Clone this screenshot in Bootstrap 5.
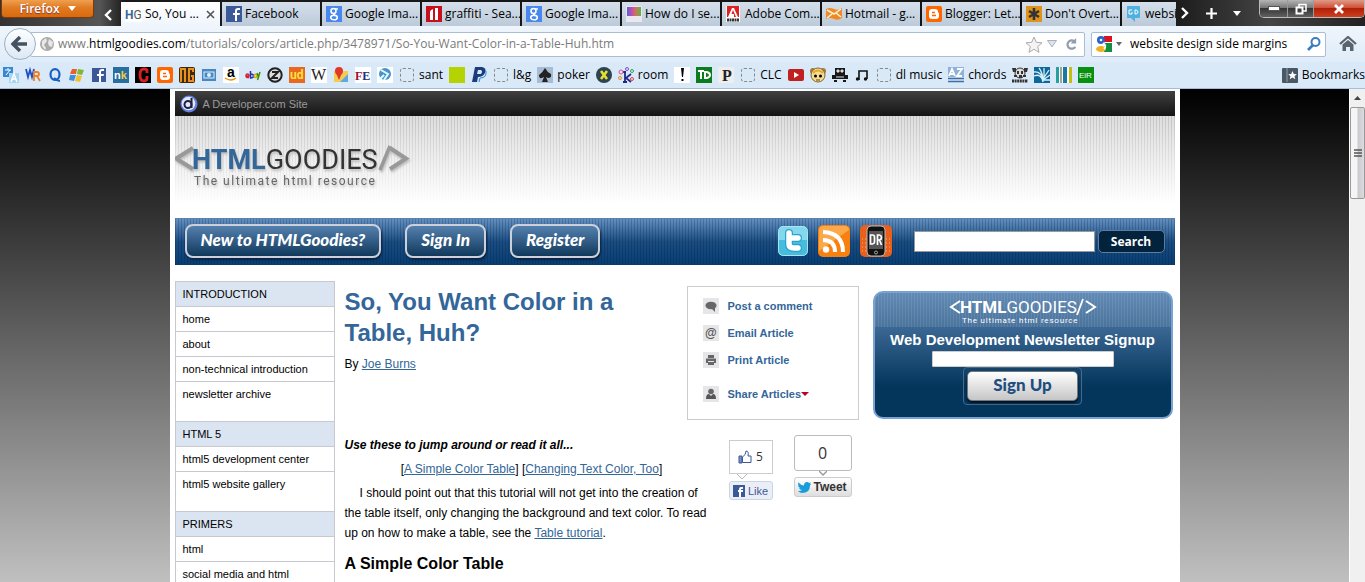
<!DOCTYPE html>
<html lang="en">
<head>
<meta charset="utf-8">
<meta name="viewport" content="width=device-width, initial-scale=1">
<title>So, You Want Color in a Table, Huh?</title>
<link href="https://cdn.jsdelivr.net/npm/bootstrap@5.3.0/dist/css/bootstrap.min.css" rel="stylesheet">
<style>
  body{font-family:"Liberation Sans",Arial,sans-serif;font-size:12px;line-height:16px;color:#000;background:#fff}
  svg{display:block;flex:none}
  .chrome{font-family:"Open Sans","Noto Sans",sans-serif;font-size:12px}
  .logotext{font-family:Roboto,sans-serif}
  /* tab strip */
  .tabstrip{height:26px;background:linear-gradient(90deg,#333 0,#555 100px,#1a1a1a 125px,#111 1150px,#222 1190px,#444 1270px,#222)}
  .fx-btn{width:93px;height:18px;margin-left:1px;border:1px solid #7c3b08;border-top:0;border-radius:0 0 4px 4px;background:linear-gradient(#efa050,#e07b20 45%,#d9690f);color:#fff;font-size:12px;font-weight:600;line-height:16px;padding:0;text-shadow:0 1px 1px #833}
  .caret{display:inline-block;border:4px solid transparent;border-top:5px solid #fff;border-bottom:0}
  .scroll-tab{width:27px}
  .tab{width:98px;height:24px;margin-right:2px;padding:0 0 0 4px;flex:none;background:linear-gradient(#d5dfeb,#bccad9);color:#000;text-decoration:none;gap:3px;white-space:nowrap}
  .tab.current{background:linear-gradient(#fff,#eff5fc);width:99px;padding-right:5px}
  .plain{border:0;background:none;padding:0;color:inherit}
  .tab-tools{width:83px;padding-left:4px}
  .winctl{width:106px;height:18px;border:1px solid #bbb;border-top:0;border-radius:0 0 5px 5px;overflow:hidden}
  .winctl button{border:0;padding:0;display:flex;align-items:center;justify-content:center;background:linear-gradient(#b5b5b5,#787878 45%,#353535 50%,#606060);border-right:1px solid #999}
  .winctl button:last-child{background:linear-gradient(#e09a88,#cf5237 45%,#b02008 50%,#cf4020);border:0}
  /* address row */
  .addressrow{height:36px;background:linear-gradient(#eff5fc,#e0ecf8);padding:0 8px 0 4px}
  .back{width:32px;height:32px;border:1px solid #9aafc6;border-radius:50%;background:linear-gradient(#fdfeff,#dbe8f5);padding:0;z-index:1}
  .field{height:25px;background:#fff;border:1px solid #a9bdd3;border-radius:2px}
  .urlfield{margin-left:-6px;padding:0 6px 0 9px;gap:4px;color:#7b7b7b}
  .urlfield b{color:#000;font-weight:400}
  .searchfield{width:235px;margin:0 13px 0 6px;padding:0 4px;gap:4px}
  .searchfield input{border:0;outline:0;padding:0;min-width:0;font-size:12px;color:#000}
  /* bookmarks */
  .marks{height:27px;background:#dae9f8;border-bottom:1px solid #a6bbd4;padding-left:3px;gap:6px;white-space:nowrap}
  .marks a{display:flex;align-items:center;gap:4px;color:#000;text-decoration:none}
  .slot{width:14px;height:14px;border:1px dashed #888;border-radius:3px;margin:0 1px}
  /* viewport */
  .view{background:linear-gradient(#000,#c0c0c0)}
  .sheet{width:100%;max-width:1010px;background:#fff;padding:2px 5px 0}
  .netbar{height:25px;background:linear-gradient(#404040,#141414);color:#9a9a9a;font-size:11px;padding-left:5px;gap:5px}
  .masthead{height:87px;background:linear-gradient(rgba(255,255,255,.1),#fff),repeating-linear-gradient(90deg,#bcbcbc 0 1px,#dadada 1px 3px);padding-top:27px}
  .masthead a svg{filter:drop-shadow(1px 2px 1px #bbb)}
  .bluebar{height:47px;margin-top:15px;background:repeating-linear-gradient(90deg,rgba(0,20,60,.22) 0 1px,transparent 1px 3px),linear-gradient(#6290c0,#1a4c80 50%,#083e72);padding:0 10px 2px;border-top:1px solid #5c83ab}
  .pill{font-family:Lato,sans-serif;font-weight:900;font-style:italic;font-size:17px;line-height:20px;height:34px;color:#fff;border:2px solid #ccd0da;border-radius:8px;background:linear-gradient(#5480ae,#11395c);padding:0 14px 2px;box-shadow:1px 2px 2px #0b2440}
  .icons{gap:10px}
  .sitesearch{width:181px;height:21px;border:1px solid #999;border-radius:0;margin:0 3px 0 22px}
  .go{width:67px;height:23px;border:1px solid #5a7ea2;border-radius:5px;background:#03223c;color:#fff;font:bold 12px "Open Sans",sans-serif;padding:0}
  .columns{margin-top:16px;gap:10px}
  /* side menu */
  .sidemenu{width:160px;flex:none;font-size:11px;line-height:14px;border:1px solid #c8c9d0}
  .sidemenu h2{font-size:11px;line-height:14px;font-weight:400;margin:0;background:#dbe5f2;padding:5px 7px;border-bottom:1px solid #c8c9d0}
  .sidemenu ul{margin:0;padding:0 0 15px;list-style:none;border-bottom:1px solid #c8c9d0}
  .sidemenu li{padding:5px 7px;height:25px;border-bottom:1px solid #c8c9d0}
  .sidemenu li:last-child{border:0;height:24px}
  .sidemenu a{color:#000;text-decoration:none}
  /* article */
  .article{width:514px;flex:none}
  .article a{color:#369}
  .article h1{font-size:24px;line-height:31px;font-weight:700;color:#369;margin:5px 0 8px}
  .tools{width:172px;height:134px;margin-top:5px;border:1px solid #ccc;padding:11px 15px;flex:none;font-size:11px;font-weight:700}
  .tools a{display:flex;align-items:center;gap:9px;text-decoration:none;height:16px;margin-bottom:11px}
  .tools a:last-child{margin-top:18px;margin-bottom:0}
  .redcaret{border:4px solid transparent;border-top-color:#c00020;border-bottom:0;margin-left:-9px}
  .lower{margin-top:15px}
  .prose{width:374px;line-height:20px}
  .prose h3{font-size:16px;line-height:20px;font-weight:700;margin:0}
  .prose p{margin-bottom:4px}
  .prose .indent{text-indent:15px;padding-right:6px;margin-bottom:11px}
  .share{gap:21px;padding-left:10px}
  .count{border:1px solid #ccc;background:#fff;font-family:"Open Sans",sans-serif;color:#333}
  .likecount{width:44px;height:34px;margin-top:5px;font-size:12px}
  .tweetcount{width:58px;height:36px;border-color:#bbb;border-radius:3px;font-size:16px}
  .notch{margin-top:-1px}
  .likebtn{width:44px;height:19px;border:1px solid #cad4e7;background:#eceef5;border-radius:3px;color:#3b5998;font-size:11px;padding:0;gap:3px}
  .tweetbtn{width:58px;height:20px;border:1px solid #ccc;background:linear-gradient(#fff,#dedede);border-radius:3px;color:#333;font-size:12px;font-weight:700;padding:0;gap:2px}
  /* newsletter */
  .signup{width:300px;height:128px;flex:none;margin:10px 0 0 4px;border:2px solid #7aa2d2;border-radius:10px;background:linear-gradient(#5480ae 0,#3a6793 28%,#04365c 75%);overflow:hidden;color:#fff}
  .signup-head{height:34px;background:repeating-linear-gradient(90deg,rgba(255,255,255,.16) 0 1px,rgba(255,255,255,.08) 1px 3px)}
  .signup label{font-size:15px;line-height:22px;margin-top:2px;font-weight:700}
  .signup input{width:182px;height:16px;border:1px solid #ccc;border-radius:1px;flex:none}
  .btnframe{width:119px;height:38px;border:1px solid #46698c;border-radius:4px}
  .signbtn{width:111px;height:30px;border:1px solid #777;border-radius:5px;background:linear-gradient(#fff,#c6c6c6);color:#1e4e80;font:900 17px/20px Lato,sans-serif;padding:0 0 2px;box-shadow:0 2px 2px #012}
  /* scroll bar */
  .vscroll{width:16px;flex:none;background:#f0f0f0;border-left:1px solid #fff}
  .vscroll .up{height:18px}
  .thumb{height:92px;border:1px solid #999;border-radius:2px;background:linear-gradient(90deg,#f5f5f5 45%,#c9cacf 55%,#dcdcdf)}
</style>
</head>
<body class="vh-100 overflow-hidden d-flex flex-column">

<header class="chrome flex-shrink-0">
  <div class="tabstrip d-flex">
    <button class="fx-btn flex-shrink-0 d-flex align-items-center justify-content-center gap-2">Firefox <i class="caret"></i></button>
    <button class="plain scroll-tab flex-shrink-0 ps-2 pt-1" aria-label="Scroll tabs left"><svg width="12" height="14" viewBox="0 0 12 14"><path d="M9 2 4 7l5 5" fill="none" stroke="#fff" stroke-width="2.4"/></svg></button>
    <nav class="d-flex flex-grow-1 overflow-hidden align-items-end" aria-label="Tabs">
      <a class="tab current d-flex align-items-center" href="#"><svg width="17" height="16"><rect width="17" height="16" fill="#fff"/><text y="13" font-size="12" font-family="Roboto" font-weight="bold" fill="#369">H<tspan fill="#555" font-weight="400">G</tspan></text></svg><span class="flex-grow-1">So, You ...</span><svg width="9" height="9" viewBox="0 0 9 9"><path d="m1 1 7 7m0-7-7 7" stroke="#555" stroke-width="1.6"/></svg></a>
      <a class="tab d-flex align-items-center" href="#"><svg width="16" height="16"><rect width="16" height="16" fill="#3b5998"/><path d="M9 15V9H7V7h2V5q0-3 3-3h2v2h-2q-1 0-1 1v2h3l-.5 2H11v6z" fill="#fff"/></svg><span>Facebook</span></a>
      <a class="tab d-flex align-items-center" href="#"><svg width="16" height="16"><rect width="16" height="16" fill="#4787ee"/><circle cx="7.500" cy="5" r="2.500" fill="none" stroke="#fff" stroke-width="1.600"/><path d="M9 3h3M7.500 8q1 1 2 2" stroke="#fff" stroke-width="1.500"/><ellipse cx="8" cy="11.500" rx="3.300" ry="2.300" fill="none" stroke="#fff" stroke-width="1.600"/></svg><span>Google Ima...</span></a>
      <a class="tab d-flex align-items-center" href="#"><svg width="16" height="16"><rect width="16" height="16" fill="#c8101c"/><path d="M4 14V6q0-2 3-3v11zm5 0V2h3v12z" fill="#fff"/></svg><span>graffiti - Sea...</span></a>
      <a class="tab d-flex align-items-center" href="#"><svg width="16" height="16"><rect width="16" height="16" fill="#4787ee"/><circle cx="7.500" cy="5" r="2.500" fill="none" stroke="#fff" stroke-width="1.600"/><path d="M9 3h3M7.500 8q1 1 2 2" stroke="#fff" stroke-width="1.500"/><ellipse cx="8" cy="11.500" rx="3.300" ry="2.300" fill="none" stroke="#fff" stroke-width="1.600"/></svg><span>Google Ima...</span></a>
      <a class="tab d-flex align-items-center" href="#"><svg width="16" height="16"><defs><linearGradient id="hue"><stop stop-color="#5a60d8"/><stop offset=".35" stop-color="#c050b0"/><stop offset=".65" stop-color="#d07850"/><stop offset="1" stop-color="#50b850"/></linearGradient></defs><rect width="16" height="16" fill="#e8e8ee"/><rect x="1" y="1" width="14" height="9" fill="url(#hue)"/></svg><span>How do I se...</span></a>
      <a class="tab d-flex align-items-center" href="#"><svg width="16" height="16"><rect width="14" height="16" fill="#fff"/><path d="M1 0h12v11H1z" fill="#e02020"/><path d="m2 11 4-9h2l4 9h-2L7 4l-1.500 4H8v3z" fill="#fff"/><path d="M1 14h12" stroke="#333" stroke-width="3" stroke-dasharray="2 .5"/></svg><span>Adobe Com...</span></a>
      <a class="tab d-flex align-items-center" href="#"><svg width="16" height="16"><path d="M0 3q4-2 8 0t8-1v10q-4 3-8 1t-8 0z" fill="#f08a24"/><path d="m1 4 7 4 7-5M1 12l5-4m9 3-5-4" stroke="#fff2d8" fill="none" stroke-width="1.5"/></svg><span>Hotmail - g...</span></a>
      <a class="tab d-flex align-items-center" href="#"><svg width="16" height="16"><rect width="16" height="16" rx="2" fill="#f60"/><path d="M6 3h3q3 0 3 3 0 1 1 1v3q0 3-3 3H6q-3 0-3-3V6q0-3 3-3z" fill="#fff"/><path d="M6 6.500h3M6 9.500h4" stroke="#f60" stroke-width="1.5"/></svg><span>Blogger: Let...</span></a>
      <a class="tab d-flex align-items-center" href="#"><svg width="16" height="16"><rect width="16" height="16" fill="#df931b"/><path d="M8 2v12M3 5l10 6m0-6L3 11" stroke="#333" stroke-width="2.600"/></svg><span>Don't Overt...</span></a>
      <a class="tab d-flex align-items-center" href="#"><svg width="16" height="16"><path d="M1 0h12q1 0 1 1v10q0 1-1 1H9v4l-4-4H1z" fill="#50b0e0"/><path d="M6 4H3v4h3V6M9 4v4h1q2-.500 2-2t-2-2z" fill="none" stroke="#fff"/></svg><span>websi</span></a>
    </nav>
    <div class="tab-tools d-flex align-items-center flex-shrink-0 gap-3">
      <button class="plain" aria-label="Scroll tabs right"><svg width="10" height="14" viewBox="0 0 10 14"><path d="m2 2 5 5-5 5" fill="none" stroke="#fff" stroke-width="2.4"/></svg></button>
      <button class="plain" aria-label="New tab"><svg width="11" height="11"><path d="M5.500 0v11M0 5.500h11" stroke="#fff" stroke-width="2.200"/></svg></button>
      <button class="plain d-flex" aria-label="All tabs"><i class="caret"></i></button>
    </div>
    <div class="winctl d-flex flex-shrink-0">
      <button style="width:27%" aria-label="Minimize"><svg width="12" height="5"><rect x=".5" y=".5" width="11" height="4" fill="#fff" stroke="#555"/></svg></button>
      <button style="width:25%" aria-label="Restore"><svg width="12" height="12"><path d="M4 4V1.500h7V8H8" fill="none" stroke="#fff" stroke-width="1.500"/><path d="M1.500 4.500h6v6h-6z" fill="none" stroke="#fff" stroke-width="2"/></svg></button>
      <button style="width:48%" aria-label="Close"><svg width="12" height="10" viewBox="0 0 12 10"><path d="m2 1 8 8m0-8L2 9" stroke="#fff" stroke-width="2.800"/></svg></button>
    </div>
  </div>

  <div class="addressrow d-flex align-items-center">
    <button class="back d-flex align-items-center justify-content-center flex-shrink-0" aria-label="Back"><svg width="18" height="16"><path d="M9 1 2 8l7 7M3 8h13" fill="none" stroke="#46525e" stroke-width="3.400"/></svg></button>
    <div class="field urlfield d-flex align-items-center flex-grow-1">
      <svg width="14" height="14"><circle cx="7" cy="7" r="7" fill="#aaa"/><path d="m2 4 4-3 1 3-3 4 2 3-1 2-3-4zM9 2l4 3-1 5-3-1-1-3z" fill="#e8e8e8"/></svg>
      <span class="flex-grow-1 text-nowrap overflow-hidden">www.<b>htmlgoodies.com</b>/tutorials/colors/article.php/3478971/So-You-Want-Color-in-a-Table-Huh.htm</span>
      <svg width="18" height="17" viewBox="0 0 18 17"><path d="m9 1 2.300 5.300 5.700.500-4.300 3.800 1.300 5.700-5-3-5 3 1.300-5.700L1 6.800l5.700-.500z" fill="#f4f4f4" stroke="#aaa"/></svg>
      <svg width="10" height="8"><path d="M.5.5h9L5 7z" fill="#dde4ee" stroke="#a8b0c0"/></svg>
      <svg width="13" height="13" viewBox="0 0 14 14" class="ms-1"><path d="M10 3.500a4.500 4.500 0 1 0 1 6" fill="none" stroke="#8f9dae" stroke-width="2.400"/><path d="M12 0v6H6z" fill="#8f9dae"/></svg>
    </div>
    <div class="field searchfield d-flex align-items-center flex-shrink-0">
      <svg width="16" height="16"><rect width="16" height="16" fill="#fff"/><path d="M8 0h8v6H8z" fill="#e01020"/><path d="M8 7h8v9H8z" fill="#109040"/><circle cx="5" cy="4" r="4" fill="#2a62c8"/><ellipse cx="5" cy="13" rx="5" ry="3" fill="#f0b020"/><circle cx="5" cy="4" r="1.300" fill="#fff"/><path d="M7 7q4 3 1 6" stroke="#fff" fill="none" stroke-width="2"/></svg>
      <svg width="6" height="4"><path d="M0 0h6L3 4z" fill="#666"/></svg>
      <input class="flex-grow-1 ms-1" type="text" aria-label="Search the web" value="website design side margins">
      <svg width="14" height="14"><circle cx="8.500" cy="5" r="4" fill="none" stroke="#3b7cc0" stroke-width="2"/><path d="M6 8 1 13" stroke="#3b7cc0" stroke-width="2.600"/></svg>
    </div>
    <svg width="18" height="16"><path d="m1 8 8-7 8 7" fill="none" stroke="#5a646e" stroke-width="2.200"/><path d="M3.500 8.500 9 4l5.500 4.500V15H11v-4H7v4H3.500z" fill="#5a646e"/></svg>
  </div>

  <nav class="marks d-flex align-items-center" aria-label="Bookmarks">
    <a href="#"><svg width="16" height="16"><rect width="10" height="10" fill="#3888d0"/><path d="M2 3h6M5 1v2M3 8l4-5" stroke="#fff"/><rect x="6" y="6" width="10" height="10" fill="#a8d4f4"/><path d="m8 15 3-8 3 8m-5-3h4" stroke="#fff" stroke-width="1.500" fill="none"/></svg></a>
    <a href="#"><svg width="16" height="16"><path d="m1 2 2 8 2-7 2 7 2-8" fill="none" stroke="#2050c8" stroke-width="1.800"/><path d="M9 14V5h3q2 0 2 2t-2 2H9m3 0 3 5" fill="none" stroke="#f08020" stroke-width="1.800"/></svg></a>
    <a href="#"><svg width="16" height="16"><ellipse cx="8" cy="7.500" rx="4.500" ry="5.300" fill="none" stroke="#1760c0" stroke-width="2.200"/><path d="M7 11q3 3 6 3" fill="none" stroke="#1760c0" stroke-width="2"/></svg></a>
    <a href="#"><svg width="16" height="16"><path d="m3 2 5 0-1 5H1z" fill="#e86030"/><path d="m9 2 6 1-2 5-5-1z" fill="#80b838"/><path d="m1 8 6 0-2 6-5-1z" fill="#4090d8"/><path d="m8 8 5 1-2 6-5-1z" fill="#f0c030"/></svg></a>
    <a href="#"><svg width="16" height="16"><rect x="1" y="1" width="14" height="14" fill="#3b5998"/><path d="M8 15V9H6V7h2V5q0-3 3-3h2v2h-2q-1 0-1 1v2h3l-.5 2H10v6z" fill="#fff"/></svg></a>
    <a href="#"><svg width="16" height="16"><rect width="16" height="16" fill="#2a6da0"/><text x="1" y="12" font-size="11" font-weight="bold" font-family="Liberation Sans" fill="#fff">n<tspan fill="#f0d040">k</tspan></text></svg></a>
    <a href="#"><svg width="16" height="16"><rect width="16" height="16"/><path d="M12 6V3q-1-1-3-1-4 0-4 6t4 6q3 0 3-3V9" fill="none" stroke="#d82020" stroke-width="2.800"/></svg></a>
    <a href="#"><svg width="16" height="16"><rect width="16" height="16" rx="2" fill="#f60"/><path d="M6 3h3q3 0 3 3 0 1 1 1v3q0 3-3 3H6q-3 0-3-3V6q0-3 3-3z" fill="#fff"/><path d="M6 6.500h3M6 9.500h4" stroke="#f60" stroke-width="1.5"/></svg></a>
    <a href="#"><svg width="16" height="16"><rect width="16" height="16" rx="2" fill="#402808"/><path d="M2 15V2h4v13M14 5V2h-4v12h4V9h-2" stroke="#e89020" stroke-width="2" fill="none"/></svg></a>
    <a href="#"><svg width="16" height="16"><rect x="1" y="2" width="14" height="12" fill="#4888c0"/><rect x="3" y="5" width="10" height="6" fill="none" stroke="#e0f0ff"/><circle cx="8" cy="8" r="2" fill="#e0f0ff"/></svg></a>
    <a href="#"><svg width="16" height="16"><rect width="16" height="16" fill="#fff"/><text x="4" y="10" font-size="14" font-weight="bold" font-family="Liberation Sans">a</text><path d="M2 11q6 4 11 0" fill="none" stroke="#f09010" stroke-width="1.500"/></svg></a>
    <a href="#"><svg width="16" height="16"><path d="M1 9h3q0-2-1.500-2T1 9q0 2 3 1.500" fill="none" stroke="#e02020" stroke-width="1.500"/><path d="M5.500 4v7q3 0 3-2t-3-2" fill="none" stroke="#2030c0" stroke-width="1.500"/><path d="M12 11V8q-2-2-3 1 1 3 3 0" fill="none" stroke="#d8b000" stroke-width="1.500"/><path d="m12 6 1.500 4L15 5m-1.500 5-1 3" fill="none" stroke="#309010" stroke-width="1.500"/></svg></a>
    <a href="#"><svg width="16" height="16"><circle cx="8" cy="8" r="6.700" fill="#ddd" stroke="#222" stroke-width="2"/><path d="M5 5h6l-6 6h6" fill="none" stroke="#222" stroke-width="2"/></svg></a>
    <a href="#"><svg width="16" height="16"><rect width="16" height="16" fill="#e86820"/><text x="1" y="12" font-size="12" font-weight="bold" font-family="Roboto" fill="#ffe040">ud</text></svg></a>
    <a href="#"><svg width="16" height="16"><rect width="16" height="16" fill="#fff"/><text y="13" font-size="16" font-family="Liberation Serif" fill="#222">W</text></svg></a>
    <a href="#"><svg width="16" height="16"><rect x="1" y="4" width="14" height="11" fill="#f4cc50"/><path d="m7 15 8-8v8z" fill="#60a8e0"/><circle cx="6" cy="4" r="4" fill="#e03828"/><path d="m3 6 3 7 3-7z" fill="#e03828"/></svg></a>
    <a href="#"><svg width="16" height="16"><rect width="16" height="16" fill="#fff"/><text y="13" font-size="12" font-family="Liberation Serif" font-weight="bold" fill="#a01030">F<tspan fill="#203080">E</tspan></text></svg></a>
    <a href="#"><svg width="16" height="16"><rect width="16" height="16" fill="#fff"/><circle cx="8" cy="7" r="6" fill="#5090c8"/><path d="m4 3 7 4-4 6M2 13l5-5" stroke="#dff" stroke-width="2" fill="none"/></svg></a>
    <a href="#"><i class="slot"></i>sant</a>
    <a href="#"><svg width="16" height="16"><rect width="16" height="16" fill="#b4d300"/></svg></a>
    <a href="#"><svg width="16" height="16"><path d="M4 0h7q5 1 3 6-2 4-7 4l-1 5H1z" fill="#1c3c80"/><path d="M7 3h3q2 1 0 4H6z" fill="#dae9f8"/><path d="M15 4q1 7-6 7l-1 4" stroke="#2090d0" fill="none"/></svg></a>
    <a href="#"><i class="slot"></i>l&amp;g</a>
    <a href="#"><svg width="16" height="16"><rect width="16" height="16" fill="#a8bcd8"/><path d="M8 1q2 4 6 6 1 4-3 4l-2-1 2 5H5l2-5q-5 3-5-2 4-3 6-7z" fill="#222"/></svg>poker</a>
    <a href="#"><svg width="16" height="16"><circle cx="8" cy="8" r="8" fill="#2c4450"/><path d="m5 4 6 8m0-8-6 8" stroke="#e8e030" stroke-width="2.600"/></svg></a>
    <a href="#"><svg width="16" height="16"><path d="M7 5v10M13 7l-5 4 5 4M5 5h3M5 15h4" fill="none" stroke="#202888" stroke-width="1.800"/><circle cx="3" cy="5" r="2" fill="none" stroke="#e05090"/><circle cx="9" cy="2" r="1.500" fill="none" stroke="#8050c0"/><circle cx="14" cy="4" r="1.500" fill="none" stroke="#30a060"/><circle cx="2" cy="11" r="1.500" fill="none" stroke="#e09020"/><circle cx="14" cy="12" r="1.500" fill="none" stroke="#d84040"/></svg>room</a>
    <a href="#"><svg width="16" height="16"><rect width="16" height="16" fill="#fff"/><path d="M7 1h3l-1 9H8zM7.500 12h2v2h-2z"/></svg></a>
    <a href="#"><svg width="16" height="16"><rect width="16" height="16" fill="#0c7c1c"/><path d="M2 4h6M5 4v8M9 5v6h2q3-1 3-3t-3-3z" fill="none" stroke="#fff" stroke-width="2"/></svg></a>
    <a href="#"><svg width="16" height="16"><rect width="16" height="16" fill="#eee"/><text x="4" y="14" font-size="16" font-weight="bold" font-family="Liberation Serif" fill="#222">P</text></svg></a>
    <a href="#"><i class="slot"></i>CLC</a>
    <a href="#"><svg width="16" height="16"><rect y="2" width="16" height="12" rx="2" fill="#c02020"/><path d="m6 5 5 3-5 3z" fill="#fff"/></svg></a>
    <a href="#"><svg width="16" height="16"><circle cx="3" cy="4" r="3" fill="#a08040"/><circle cx="13" cy="4" r="3" fill="#a08040"/><circle cx="8" cy="8" r="7" fill="#f4dc90" stroke="#806830"/><path d="M3 6q5-5 10 0" fill="none" stroke="#e8a830" stroke-width="2"/><circle cx="5.500" cy="9" r="1.500"/><circle cx="10.500" cy="9" r="1.500"/><path d="M6 13h4" stroke="#604818"/></svg></a>
    <a href="#"><svg width="16" height="16"><path d="M3 1h10v7h3v4H0V8h3zM2 13h3v2H2zm9 0h3v2h-3z" fill="#181818"/><path d="M5 3h2v2H5zm4 0h2v2H9zM4 10h8" fill="#ddd" stroke="#ddd"/></svg></a>
    <a href="#"><svg width="16" height="16"><path d="M5 13V4h8v8" fill="none" stroke="#111" stroke-width="1.600"/><circle cx="3.500" cy="12" r="1.700" fill="#111"/><circle cx="11.500" cy="12" r="1.700" fill="#111"/></svg></a>
    <a href="#"><i class="slot"></i>dl music</a>
    <a href="#"><svg width="16" height="16"><rect width="16" height="16" fill="#d4e4f4"/><path d="M0 0h16v10H0z" fill="#8fb3d8"/><path d="m1 9 3-7 3 7M2 7h4M9 2h5L9 9h5" fill="none" stroke="#fff" stroke-width="1.800"/><path d="M0 11.500h16M0 14.500h16" stroke="#4070a8" stroke-width="1.500"/></svg>chords</a>
    <a href="#"><svg width="16" height="16"><circle cx="8" cy="6" r="5" fill="#ddd" stroke="#333"/><path d="M0 1h4v4H1zm12 0h4l-1 4h-3zM5 4h2v3H5zm4 0h2v3H9zM7 8h3v3H7zM2 8h3v2H2zm9 0h3v2h-3z" fill="#333"/><path d="M0 14h16" stroke="#333" stroke-width="3" stroke-dasharray="2 .6"/></svg></a>
    <a href="#"><svg width="16" height="16"><rect width="16" height="16" fill="#0c6898"/><path d="M0 9q7-3 9 6M0 5q8-1 9 10M5 1q4 5 4 14M10 1v10M15 3l-6 9m7-4-7 5M16 13H9" fill="none" stroke="#d8f0fa" stroke-width="1.300"/></svg></a>
    <a href="#"><svg width="16" height="16"><rect width="16" height="16" fill="#fff"/><path d="M0 0h3v16H0z" fill="#28a0a0"/><path d="M4 0h2v16H4z" fill="#a0a890"/><path d="M7 0h4v16H7z" fill="#1878a8"/><path d="M13 0h3v16h-3z" fill="#c0c010"/></svg></a>
    <a href="#"><svg width="16" height="16"><rect width="16" height="16" fill="#089010"/><text x="1" y="11" font-size="8" font-family="Liberation Sans" fill="#fff">EiR</text></svg></a>
    <a class="ms-auto" href="#"><svg width="16" height="16"><rect width="16" height="15" y="1" rx="1" fill="#4a5866"/><path d="M5 1v14" stroke="#90a0b0"/><path d="m10.500 4 1.300 3 3 .300-2.300 2 .800 3-2.800-1.700L7.700 12.300l.800-3-2.300-2 3-.300z" fill="#fff"/></svg>Bookmarks</a>
  </nav>
</header>

<div class="d-flex flex-grow-1 overflow-hidden">
  <main class="view flex-grow-1 d-flex justify-content-center overflow-hidden">
    <div class="sheet">
      <div class="netbar d-flex align-items-center"><svg width="18" height="18"><circle cx="9" cy="9" r="8.500" fill="#6080e0"/><circle cx="8.500" cy="8.500" r="6.800" fill="#e4e8f8"/><circle cx="8" cy="9.500" r="3.500" fill="none" stroke="#202040" stroke-width="2"/><path d="M11.500 3v10" stroke="#202040" stroke-width="2"/></svg>A Developer.com Site</div>
      <div class="masthead">
        <a class="logotext d-inline-block text-decoration-none" href="#"><svg width="236" height="46"><path d="m18 5-17 10.500L18 26M215 5l16 10.500L215 26" fill="none" stroke="#999" stroke-width="4"/><path d="M215 3 205 27" stroke="#999" stroke-width="3.500"/><text x="17" y="26" font-size="27" font-weight="bold" fill="#369">HTML<tspan font-weight="400" fill="#333">GOODIES</tspan></text><text x="19" y="42" font-size="12" letter-spacing="1.500" fill="#666">The ultimate html resource</text></svg></a>
      </div>
      <div class="bluebar d-flex align-items-center">
        <div class="d-flex gap-4"><button class="pill">New to HTMLGoodies?</button><button class="pill">Sign In</button><button class="pill">Register</button></div>
        <div class="icons d-flex align-items-center ms-auto">
          <a href="#" aria-label="Twitter"><svg width="30" height="32"><rect width="30" height="30" y="1" rx="5" fill="#48bcdc"/><path d="M1 6q0-5 5-5h18q5 0 5 5v9H1z" fill="#84d8ee"/><rect x=".5" y="1.500" width="29" height="29" rx="5" fill="none" stroke="#a8e6f4"/><path d="M11 8v11q0 4 5 4h4m-9-10h9" fill="none" stroke="#2ba4cc" stroke-width="8" stroke-linecap="round" stroke-linejoin="round"/><path d="M11 8v11q0 4 5 4h4m-9-10h9" fill="none" stroke="#fff" stroke-width="5.500" stroke-linecap="round" stroke-linejoin="round"/></svg></a>
          <a href="#" aria-label="RSS"><svg width="32" height="32"><rect width="32" height="32" rx="5" fill="#f88010"/><path d="M1 6q0-5 5-5h20q5 0 5 4L1 26z" fill="#fca848"/><circle cx="8" cy="24.500" r="3.200" fill="#fff"/><path d="M5 15q12 0 12 12M5 7q20 1 20 20" fill="none" stroke="#fff" stroke-width="4"/></svg></a>
          <a href="#" aria-label="DR"><svg width="32" height="32"><rect width="32" height="32" rx="5" fill="#e8601c"/><path d="M2 14h28M2 18h28M2 22h28M2 26h28" stroke="#ffb060" stroke-dasharray="1 2"/><rect x="7" y="1" width="18" height="30" rx="4" fill="#111" stroke="#bbb"/><rect x="9" y="6" width="14" height="18" fill="#555"/><path d="M10.500 10v9h2q2-.500 2-2v-5q0-2-2-2zM17.500 20V10h2q2 .500 2 2.500t-2 2.500h-2m2 0 2 5" fill="none" stroke="#fff" stroke-width="1.700"/><circle cx="16" cy="27.500" r="1.500" fill="none" stroke="#aaa"/></svg></a>
        </div>
        <input class="sitesearch" type="text" aria-label="Search HTMLGoodies"><button class="go">Search</button>
      </div>

      <div class="columns d-flex">
        <nav class="sidemenu">
          <h2>INTRODUCTION</h2>
          <ul><li><a href="#">home</a></li><li><a href="#">about</a></li><li><a href="#">non-technical introduction</a></li><li><a href="#">newsletter archive</a></li></ul>
          <h2>HTML 5</h2>
          <ul><li><a href="#">html5 development center</a></li><li><a href="#">html5 website gallery</a></li></ul>
          <h2>PRIMERS</h2>
          <ul><li><a href="#">html</a></li><li><a href="#">social media and html</a></li></ul>
        </nav>

        <article class="article">
          <div class="d-flex">
            <div class="flex-grow-1"><h1>So, You Want Color in a Table, Huh?</h1>By <a href="#">Joe Burns</a></div>
            <div class="tools">
              <a href="#"><svg width="16" height="16"><rect width="16" height="16" fill="#e6e6e8"/><ellipse cx="8" cy="7.500" rx="5.500" ry="3.800" fill="#666"/><path d="M8 10h4v4z" fill="#666"/></svg>Post a comment</a>
              <a href="#"><svg width="16" height="16"><rect width="16" height="16" fill="#e6e6e8"/><text x="2" y="12" font-size="12" font-weight="bold" font-family="Liberation Sans" fill="#555">@</text></svg>Email Article</a>
              <a href="#"><svg width="16" height="16"><rect width="16" height="16" fill="#e6e6e8"/><path d="M5 3h6v3H5zM3 6.500h10V11h-2V9H5v2H3zM5 10h6v3H5z" fill="#666"/></svg>Print Article</a>
              <a href="#"><svg width="16" height="16"><rect width="16" height="16" fill="#e6e6e8"/><circle cx="8" cy="5.500" r="2.800" fill="#666"/><path d="M3 13q0-5 3-5l2 2 2-2q3 0 3 5z" fill="#555"/></svg>Share Articles<i class="redcaret"></i></a>
            </div>
          </div>
          <div class="lower d-flex">
            <div class="prose">
              <p><b><i>Use these to jump around or read it all...</i></b></p>
              <p class="text-center">[<a href="#">A Simple Color Table</a>] [<a href="#">Changing Text Color, Too</a>]</p>
              <p class="indent">I should point out that this tutorial will not get into the creation of the table itself, only changing the background and text color. To read up on how to make a table, see the <a href="#">Table tutorial</a>.</p>
              <h3>A Simple Color Table</h3>
            </div>
            <div class="share d-flex align-items-start">
              <div><div class="count likecount d-flex align-items-center justify-content-center gap-1"><svg width="14" height="14"><path d="M1 6h3v7H1z" fill="#8090c0" stroke="#3b5998"/><path d="M4.500 7Q8 5 8 1q3 0 2 5h3v6.500H4.500z" fill="#fff" stroke="#3b5998"/></svg>5</div><svg class="notch ms-2" width="10" height="8"><path d="m0 1 5 5 5-5" fill="#fff" stroke="#bbb"/></svg><button class="likebtn d-flex align-items-center justify-content-center"><svg width="12" height="12"><rect width="12" height="12" fill="#3b5998"/><path d="M6 12V7H5V5h1V4q0-2 2-2h2v2H8v1h2v2H8v5z" fill="#fff"/></svg>Like</button></div>
              <div><div class="count tweetcount d-flex align-items-center justify-content-center">0</div><svg class="notch mx-auto" width="8" height="7"><path d="m0 1 4 4 4-4" fill="#fff" stroke="#999" stroke-width="1.400"/></svg><button class="tweetbtn d-flex align-items-center justify-content-center"><svg width="13" height="11"><path d="M0 9q3 0 4-1-2 0-3-2h1Q0 5 0 3l1 .500Q-.500 2 .500.500 3 3.500 6 3.500 6 0 9 0q1.500 0 2 1L13 .500 12 2l1 0-1 1.500Q12 11 4 11 2 11 0 9z" fill="#189cdc"/></svg>Tweet</button></div>
            </div>
          </div>
        </article>

        <form class="signup text-center d-flex flex-column align-items-center">
          <div class="signup-head flex-shrink-0 logotext w-100 d-flex justify-content-center"><svg width="148" height="32"><path d="m11 8-9 6 9 6M137 8l9 6-9 6" fill="none" stroke="#fff" stroke-width="2"/><path d="m134 6-6 16" stroke="#fff" stroke-width="1.800"/><text x="11" y="20" font-size="17" font-weight="bold" fill="#fff">HTML<tspan font-weight="400">GOODIES</tspan></text><text x="13" y="30" font-size="8" letter-spacing=".8" fill="#fff">The ultimate html resource</text></svg></div>
          <label for="nl">Web Development Newsletter Signup</label>
          <input id="nl" type="email">
          <div class="btnframe flex-shrink-0 d-flex align-items-center justify-content-center"><button class="signbtn">Sign Up</button></div>
        </form>
      </div>
    </div>
  </main>
  <div class="vscroll">
    <div class="up d-flex align-items-center justify-content-center"><svg width="7" height="5"><path d="M0 4h7L3.500 0z" fill="#444"/></svg></div>
    <div class="thumb d-flex align-items-center justify-content-center"><svg width="8" height="9"><path d="M0 1h8M0 4h8M0 7h8" stroke="#555" stroke-width="1.500"/></svg></div>
  </div>
</div>
<script src="https://cdn.jsdelivr.net/npm/bootstrap@5.3.0/dist/js/bootstrap.bundle.min.js"></script>
</body>
</html>
